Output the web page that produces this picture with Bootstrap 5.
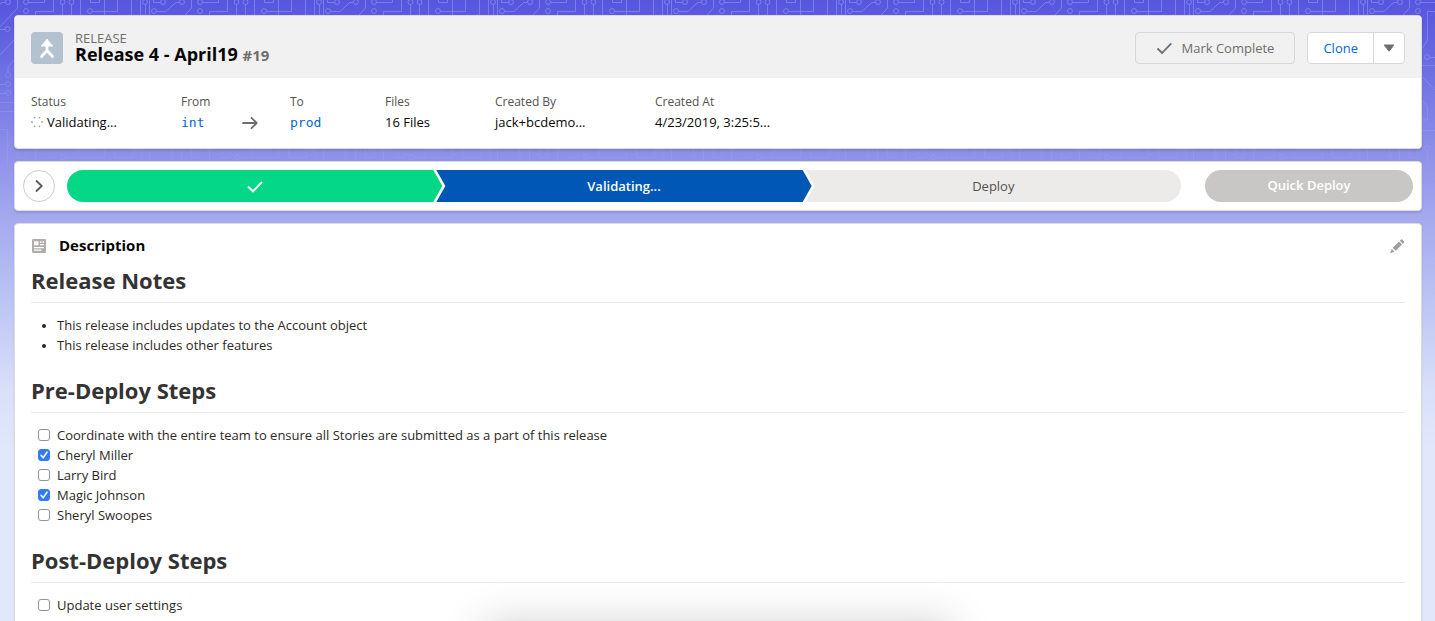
<!DOCTYPE html>
<html lang="en">
<head>
<meta charset="utf-8">
<meta name="viewport" content="width=device-width, initial-scale=1">
<title>Release 4 - April19</title>
<link rel="stylesheet" href="https://cdn.jsdelivr.net/npm/bootstrap@5.3.0/dist/css/bootstrap.min.css">
<style>
body{font-family:"Open Sans","Noto Sans",sans-serif;font-size:13px;line-height:20px;color:#080707;min-height:100vh;
  background:#e1e8fb linear-gradient(180deg,#5855de 0,#5f5fe0 30px,#898be8 140px,#a2a6ee 210px,#bcc4f4 300px,#d8e0fa 390px,#e1e8fb 450px) no-repeat;overflow:hidden}
a{color:#0067d2}
.circuit{position:absolute;inset:0 0 auto 0;z-index:-1;width:100%;height:240px}
.page{padding:15px 13px 0 14px;gap:12px}
.panel{background:#fff;border:1px solid #dddbda;border-radius:4px;box-shadow:0 2px 2px rgba(0,0,0,.1)}
.panel-head{background:#f1f1f1;padding:15px 16px 14px;border-radius:3px 3px 0 0}
.record-icon{width:32px;height:32px;background:#b3c2ce;border-radius:4px}
.eyebrow{font-size:13px;line-height:14px;color:#706e6b}
.record-title{font-size:18px;line-height:18px;font-weight:700}
.record-title small{font-size:15px;font-weight:700;color:#706e6b}
.btn-plain{--bs-btn-font-size:13px;--bs-btn-line-height:20px;--bs-btn-padding-y:5px;--bs-btn-padding-x:15px;--bs-btn-border-color:#d8d8d8;--bs-btn-bg:#fff;--bs-btn-color:#0067d2;
  --bs-btn-disabled-bg:transparent;--bs-btn-disabled-color:#706e6b;--bs-btn-disabled-border-color:#d8d8d8;--bs-btn-disabled-opacity:1;--bs-btn-border-radius:4px}
.btn-mark{padding-left:20px;padding-right:20px}
.btn-caret{padding-left:9px;padding-right:9px}
.fields{padding:16px 16px 15px}
.fields dt{font-size:12px;line-height:16px;font-weight:400;color:#54524f;margin-bottom:2px}
.fields dd{margin:0}
.fields a{font-family:"DejaVu Sans Mono","Liberation Mono",monospace}
.w-status{width:150px}.w-from{width:61px}.w-arrow{width:48px}.w-to{width:95px}.w-files{width:110px}.w-by{width:160px}
.btn-round{width:32px;height:32px;border:1px solid #cfcdcb;background:#fff}
.track{margin:0 24px 0 12px}
.stage{flex:1 1 0;height:32px;display:flex;align-items:center;justify-content:center}
.stage+.stage{margin-left:-6px}
.stage-done{background:#04d886;color:#fff;border-radius:16px 0 0 16px;clip-path:polygon(0 0,calc(100% - 9px) 0,100% 50%,calc(100% - 9px) 100%,0 100%)}
.stage-now{background:#0057b5;color:#fff;font-weight:600;clip-path:polygon(0 0,calc(100% - 9px) 0,100% 50%,calc(100% - 9px) 100%,0 100%,9px 50%)}
.stage-next{background:#ecebea;color:#54524f;border-radius:0 16px 16px 0;clip-path:polygon(0 0,100% 0,100% 100%,0 100%,9px 50%)}
.btn-quick{width:208px;height:32px;padding:0 0 2px;background:#c9c7c5;color:#fff;font-weight:600}
.desc{padding:11px 16px 24px}
.desc-title{font-size:15px;line-height:20px;font-weight:700}
.desc-head{margin-bottom:11px}
.notes{color:#2b2826}
.notes h3{font-size:22px;line-height:28px;font-weight:700;color:#333;margin:21px 0 12px;padding-bottom:8px;border-bottom:1px solid #eaeaea}
.notes h3:first-child{margin-top:0}
.notes ul{margin:0;padding-left:26px}
.notes li::marker{font-size:11px}
.steps input{appearance:none;width:12px;height:12px;margin:0 7px 0 0;background:#fff;border:1px solid #949494;border-radius:3px}
.steps input:checked{border-color:#2f7af6;background:#2f7af6 url("data:image/svg+xml,%3Csvg xmlns='http://www.w3.org/2000/svg' viewBox='0 0 10 10'%3E%3Cpath d='M2 5.3 4.2 7.7 8 2.2' fill='none' stroke='white' stroke-width='1.6' stroke-linecap='round'/%3E%3C/svg%3E") center/10px no-repeat}
.notes ul.steps{padding-left:7px}
.toast-edge{position:fixed;top:100%;left:50%;width:470px;height:60px;transform:translateX(-50%);box-shadow:0 0 40px rgba(0,0,0,.17)}
</style>
</head>
<body>
<svg class="circuit" aria-hidden="true">
  <defs>
    <pattern id="board" width="174" height="240" patternUnits="userSpaceOnUse">
      <g fill="none" stroke="#a9b4ff" stroke-opacity=".42" stroke-width="1">
        <circle cx="26" cy="2" r="2.5"/><circle cx="26" cy="11" r="2.5"/><path d="M29 2.500H44.500V0M35.500 40V11.500H53.500V0M35.500 40L29 50"/>
        <circle cx="62.500" cy="2" r="2.500"/><circle cx="71.500" cy="2" r="2.500"/><path d="M62.500 5V20M71.500 5V20M80.500 0V20M104.500 0V20M131.500 0V20M140.500 0V20M149.500 0V20"/>
        <circle cx="90" cy="11" r="2.500"/><path d="M93 11.500H117.500V0M90.500 0V2.500H99.500V0"/>
        <circle cx="145" cy="2" r="2.500"/><path d="M145.500 5V20"/>
        <circle cx="163" cy="2" r="2.500"/><path d="M160 2.500H153.500V0"/>
        <circle cx="154" cy="11" r="2.500"/><path d="M157 11.500H166L174 4"/>
        <circle cx="8" cy="2" r="2.500"/><path d="M5 2.500H2L0 4M17.500 0V8L0 27"/>
        <circle cx="7.500" cy="29" r="2.500"/><path d="M5 29.500H0M17 37L0 55M14 60L8 67V72M0 102.500H14M0 111.500H14M7.500 166V129.500H0M0 84.500H5M0 93.500H5"/>
        <circle cx="8" cy="75" r="2.500"/><circle cx="8" cy="84" r="2.500"/><circle cx="8" cy="93" r="2.500"/>
        <circle cx="35" cy="57" r="2.500"/><path d="M38 57.500H45M28 65.500H45M28 75L45 92M30 100L35.500 107V120H28M30 130.500H45M35.500 151V166H29"/>
        <circle cx="35" cy="148" r="2.500"/>
        <circle cx="63" cy="157" r="2.500"/><path d="M66 157.500H104.500V148M77 157.500V150H96M17.500 148V157.500H26V148M114.500 148V157.500H133V150H142V162M149.500 148V162"/>
        <circle cx="172" cy="157" r="2"/><path d="M171.500 154V148M46 157.500H56V148M0 174.500H14M0 185L14 172M29 190V178H45"/>
        <path d="M15 223L28 212M60 222V214M104 222L116 211" stroke-opacity=".25"/>
      </g>
    </pattern>
    <linearGradient id="fade" x2="0" y2="1"><stop offset="0" stop-color="#fff"/><stop offset=".65" stop-color="#fff" stop-opacity=".4"/><stop offset="1" stop-color="#fff" stop-opacity=".1"/></linearGradient>
    <mask id="fadeMask"><rect width="100%" height="240" fill="url(#fade)"/></mask>
  </defs>
  <rect width="100%" height="240" fill="url(#board)" mask="url(#fadeMask)"/>
</svg>

<main class="page d-flex flex-column">
  <section class="panel">
    <header class="panel-head d-flex align-items-center justify-content-between">
      <div class="d-flex align-items-center gap-2">
        <div class="record-icon me-1">
          <svg class="d-block" width="32" height="32" viewBox="0 0 32 32" aria-hidden="true"><path d="M16 7 22 14.200H10z" fill="#fff" stroke="#fff" stroke-width=".5" stroke-linejoin="round"/><path d="M16 12V18.500L10.500 24.500M16 18.500 21.500 24.500" fill="none" stroke="#fff" stroke-width="2.800" stroke-linecap="round" stroke-linejoin="round"/></svg>
        </div>
        <div>
          <div class="eyebrow">RELEASE</div>
          <h1 class="record-title mb-0">Release 4 - April19 <small>#19</small></h1>
        </div>
      </div>
      <div class="d-flex">
        <button type="button" class="btn btn-plain btn-mark d-flex align-items-center me-2" disabled>
          <svg class="me-2" width="17" height="16" viewBox="0 0 17 16" fill="none" stroke="#706e6b" stroke-width="1.800" aria-hidden="true"><path d="M1.500 8.500 6 13 15.300 3.300"/></svg>Mark Complete
        </button>
        <div class="btn-group ms-1">
          <button type="button" class="btn btn-plain">Clone</button>
          <button type="button" class="btn btn-plain btn-caret d-flex align-items-center" aria-label="More actions"><svg width="12" height="8" viewBox="0 0 12 8" aria-hidden="true"><path d="M1.200 1h9.600L6 7.200z" fill="#706e6b" stroke="#706e6b" stroke-linejoin="round"/></svg></button>
        </div>
      </div>
    </header>
    <dl class="fields d-flex mb-0">
      <div class="w-status"><dt>Status</dt><dd class="d-flex align-items-center">
        <svg class="me-1" width="12" height="12" viewBox="0 0 12 12" fill="#a5a29f" aria-hidden="true"><circle cx="1" cy="6" r=".9"/><circle cx="3.500" cy="1.700" r=".9"/><circle cx="8.500" cy="1.700" r=".9"/><circle cx="11" cy="6" r=".9"/><circle cx="3.500" cy="10.300" r=".9"/><circle cx="8.500" cy="10.300" r=".9"/></svg>Validating...</dd></div>
      <div class="w-from"><dt>From</dt><dd><a class="text-decoration-none" href="#">int</a></dd></div>
      <div class="w-arrow d-flex align-items-end"><svg width="16" height="20" viewBox="0 0 16 20" fill="none" stroke="#706e6b" stroke-width="1.800" stroke-linecap="round" stroke-linejoin="round" aria-hidden="true"><path d="M1 10H14.500M9.500 4.800 14.700 10 9.500 15.200"/></svg></div>
      <div class="w-to"><dt>To</dt><dd><a class="text-decoration-none" href="#">prod</a></dd></div>
      <div class="w-files"><dt>Files</dt><dd>16 Files</dd></div>
      <div class="w-by"><dt>Created By</dt><dd>jack+bcdemo...</dd></div>
      <div><dt>Created At</dt><dd>4/23/2019, 3:25:5...</dd></div>
    </dl>
  </section>

  <section class="panel d-flex p-2">
    <button type="button" class="btn-round rounded-circle p-0 d-flex align-items-center justify-content-center flex-shrink-0" aria-label="Expand stages"><svg width="8" height="12" viewBox="0 0 8 12" fill="none" stroke="#5c5a57" stroke-width="1.800" stroke-linecap="round" stroke-linejoin="round" aria-hidden="true"><path d="M1.500 1 6.700 6 1.500 11"/></svg></button>
    <div class="d-flex flex-grow-1 track">
      <div class="stage stage-done"><svg width="16" height="16" viewBox="0 0 16 16" fill="none" stroke="#fff" stroke-width="1.900" role="img" aria-label="Done"><path d="M1 8.500 6 13.300 15 4"/></svg></div>
      <div class="stage stage-now">Validating...</div>
      <div class="stage stage-next">Deploy</div>
    </div>
    <button type="button" class="btn-quick border-0 rounded-pill flex-shrink-0" disabled>Quick Deploy</button>
  </section>

  <section class="panel desc">
    <header class="desc-head d-flex align-items-center">
      <svg class="me-2" width="16" height="16" viewBox="0 0 16 16" aria-hidden="true"><rect x="1" y="2" width="14" height="14" rx="1.200" fill="#b0adab"/><path d="M3 4.200h4.500v4H3zM9 4.200h1.500v1.500H9zM9 7h4v1.200H9zM11.500 4.200h1.500v1.500h-1.500zM3 10h10v1.200H3zM3 12.600h7.500v1.200H3z" fill="#fff"/></svg>
      <h2 class="desc-title mb-0 ms-1 flex-grow-1">Description</h2>
      <button type="button" class="border-0 bg-transparent p-0 d-flex" aria-label="Edit description"><svg width="16" height="16" viewBox="0 0 16 16" fill="#a19f9c" aria-hidden="true"><path d="M3.700 10.800 10 4.500l3 3-6.300 6.300zM10.800 3.700l1.300-1.200q.5-.4 1 0l2 2q.4.500 0 1l-1.300 1.200zM2.800 12 5.500 14.700 1.700 16q-.5 0-.4-.5z"/></svg></button>
    </header>
    <div class="notes">
      <h3>Release Notes</h3>
      <ul>
        <li>This release includes updates to the Account object</li>
        <li>This release includes other features</li>
      </ul>
      <h3>Pre-Deploy Steps</h3>
      <ul class="steps list-unstyled">
        <li><label class="d-flex align-items-center"><input type="checkbox">Coordinate with the entire team to ensure all Stories are submitted as a part of this release</label></li>
        <li><label class="d-flex align-items-center"><input type="checkbox" checked>Cheryl Miller</label></li>
        <li><label class="d-flex align-items-center"><input type="checkbox">Larry Bird</label></li>
        <li><label class="d-flex align-items-center"><input type="checkbox" checked>Magic Johnson</label></li>
        <li><label class="d-flex align-items-center"><input type="checkbox">Sheryl Swoopes</label></li>
      </ul>
      <h3>Post-Deploy Steps</h3>
      <ul class="steps list-unstyled">
        <li><label class="d-flex align-items-center"><input type="checkbox">Update user settings</label></li>
      </ul>
    </div>
  </section>
</main>
<div class="toast-edge"></div>
<script src="https://cdn.jsdelivr.net/npm/bootstrap@5.3.0/dist/js/bootstrap.bundle.min.js"></script>
</body>
</html>
